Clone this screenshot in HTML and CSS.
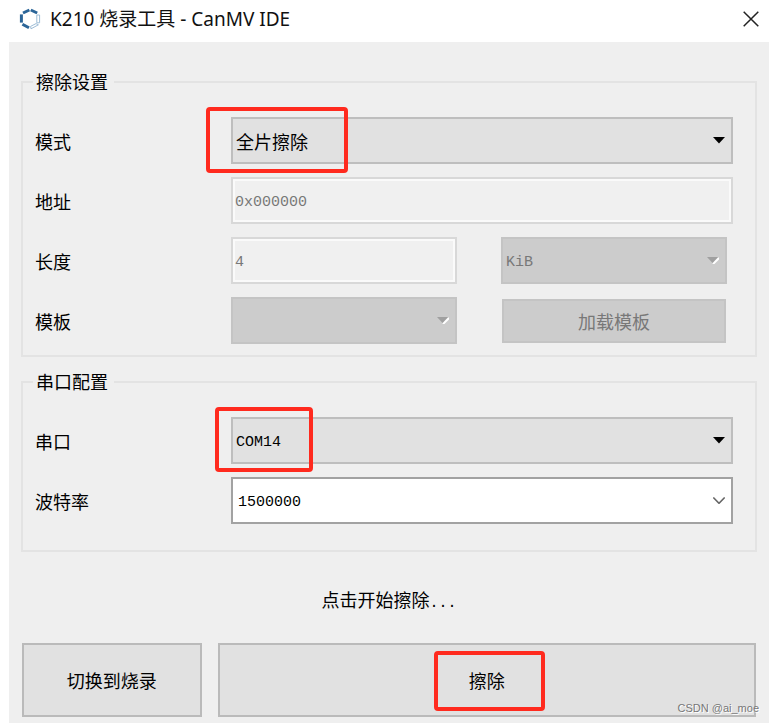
FILE: index.html
```html
<!DOCTYPE html>
<html lang="zh-CN">
<head>
<meta charset="utf-8">
<title>K210 烧录工具 - CanMV IDE</title>
<link rel="stylesheet" href="styles.css">
</head>
<body>
<main class="window">
  <header class="titlebar">
    <svg class="logo" viewBox="0 0 22 22" aria-hidden="true">
      <g fill="none" stroke="#2b6598" stroke-width="3">
        <path d="M10.4 2 4 5"/>
        <path d="M2.4 6.4V14.6"/>
        <path d="M3.4 16.2 10 19.8"/>
        <path d="M11.8 2 18.2 5"/>
      </g>
      <g fill="#fff" stroke="#9dbcd6" stroke-width="1">
        <path d="M17.8 7H20.6V14.8H17.8Z"/>
        <path d="M11.6 18.4 17 15.6 19.4 16.8 12 20.8Z"/>
      </g>
    </svg>
    <h1 class="title">K210 烧录工具 - CanMV IDE</h1>
    <button class="close" type="button" aria-label="关闭">
      <svg viewBox="0 0 16 16"><path d="M.7.7 15.3 15.3M15.3.7.7 15.3" fill="none" stroke="#222" stroke-width="1.5"/></svg>
    </button>
  </header>
  <form class="dialog">
    <fieldset class="group">
      <legend>擦除设置</legend>
      <div class="row">
        <label for="mode">模式</label>
        <div class="combo">
          <select id="mode" class="field"><option>全片擦除</option></select>
          <svg class="arrow" viewBox="0 0 12 7"><path d="M0 0H12L6 6.5Z" fill="#000"/></svg>
          <span class="mark mark-mode"></span>
        </div>
      </div>
      <div class="row">
        <label for="address">地址</label>
        <input id="address" class="field text mono" type="text" value="0x000000" disabled>
      </div>
      <div class="row">
        <label for="length">长度</label>
        <div class="pair">
          <input id="length" class="field text mono" type="text" value="4" disabled>
          <div class="combo">
            <select class="field mono" aria-label="单位" disabled><option>KiB</option></select>
            <svg class="arrow" viewBox="0 0 12 7"><path d="M6 7 12 1" stroke="#fff" stroke-width="2"/><path d="M0 0H11L5.5 6Z" fill="#a0a0a0"/></svg>
          </div>
        </div>
      </div>
      <div class="row">
        <label for="template">模板</label>
        <div class="pair">
          <div class="combo">
            <select id="template" class="field" disabled><option></option></select>
            <svg class="arrow" viewBox="0 0 12 7"><path d="M6 7 12 1" stroke="#fff" stroke-width="2"/><path d="M0 0H11L5.5 6Z" fill="#a0a0a0"/></svg>
          </div>
          <button class="button load" type="button" disabled>加载模板</button>
        </div>
      </div>
    </fieldset>
    <fieldset class="group serial">
      <legend>串口配置</legend>
      <div class="row">
        <label for="port">串口</label>
        <div class="combo">
          <select id="port" class="field mono"><option>COM14</option></select>
          <svg class="arrow" viewBox="0 0 12 7"><path d="M0 0H12L6 6.5Z" fill="#000"/></svg>
          <span class="mark mark-port"></span>
        </div>
      </div>
      <div class="row">
        <label for="baud">波特率</label>
        <div class="combo">
          <input id="baud" class="field editable mono" type="text" value="1500000">
          <svg class="arrow" viewBox="0 0 12 7"><path d="M.3.5 6 6.3 11.7.5" fill="none" stroke="#666" stroke-width="1.6"/></svg>
        </div>
      </div>
    </fieldset>
    <p class="status">点击开始擦除<span class="dots">...</span></p>
    <div class="actions">
      <button class="button" type="button">切换到烧录</button>
      <button class="button erase" type="button">擦除<span class="mark mark-erase"></span></button>
    </div>
  </form>
  <span class="watermark">CSDN @ai_moe</span>
</main>
</body>
</html>
```
FILE: styles.css
```css
* { box-sizing: border-box; }

body {
  margin: 0;
  background: #fff;
  color: #000;
  font: 18px/24px "Noto Sans CJK SC", sans-serif;
}

.window {
  position: relative;
  display: flex;
  flex-direction: column;
  min-height: 100vh;
  padding: 0 4px 0 9px;
}

.titlebar {
  display: flex;
  align-items: center;
  height: 42px;
  padding: 0 10px 5px;
}

.logo { width: 22px; height: 22px; }

.title {
  flex: 1;
  margin: 0 0 0 9px;
  color: #111;
  font: 19px/24px "Noto Sans", "Noto Sans CJK SC", sans-serif;
}

.close {
  display: flex;
  padding: 0;
  border: 0;
  background: none;
}

.close svg { width: 16px; height: 16px; }

.dialog {
  flex: 1;
  padding: 28px 12px 6px;
  background: #efefef;
}

.group {
  min-width: 0;
  margin: 0 0 13px;
  padding: 23px 22px 11px 12px;
  border: 2px solid #e3e3e3;
}

.serial { margin-bottom: 0; padding-bottom: 26px; }

legend {
  height: 24px;
  margin-left: -2px;
  padding: 0 6px 0 3px;
  line-height: 22px;
}

.row {
  display: grid;
  grid-template-columns: 196px 1fr;
  align-items: center;
}

.row + .row { margin-top: 13px; }

.pair {
  display: grid;
  grid-template-columns: 1fr 1fr;
  align-items: center;
  gap: 44px;
  padding-right: 6px;
}

.combo { position: relative; }

.field {
  display: block;
  width: 100%;
  height: 47px;
  margin: 0;
  padding: 0 3px;
  border: 2px solid #bebebe;
  border-radius: 0;
  appearance: none;
  background: #e1e1e1;
  color: #000;
  font: inherit;
  opacity: 1;
}

.field:disabled, .button:disabled {
  border-color: #c4c4c4;
  background: #ccc;
  color: #787878;
}

.text:disabled {
  padding: 0 2px;
  border-color: #d8d8d8;
  background: #f0f0f0;
  box-shadow: inset 0 0 0 2px #fafafa;
}

.editable {
  padding: 0 5px;
  border-color: #a2a2a2;
  background: #fff;
}

.mono, .dots { font-family: "Liberation Mono", monospace; font-size: 15px; }

.field.mono { padding-top: 4px; }

.dots { line-height: 1; }

.arrow {
  position: absolute;
  top: 20px;
  right: 8px;
  width: 12px;
  height: 7px;
  pointer-events: none;
}

.button {
  position: relative;
  padding: 0;
  border: 2px solid #bababa;
  background: #e1e1e1;
  color: #000;
  font: inherit;
}

.load { height: 44px; margin: 0 1px; }

.status {
  margin: 0;
  padding: 35px 0 32px;
  text-align: center;
}

.actions {
  display: grid;
  grid-template-columns: 1fr 3fr;
  gap: 16px;
  padding: 0 1px;
}

.actions .button { height: 74px; }

.mark {
  position: absolute;
  border: 4px solid #ff2a1e;
  border-radius: 4px;
  pointer-events: none;
}

.mark-mode { left: -25px; top: -10px; width: 142px; height: 66px; }
.mark-port { left: -16px; top: -10px; width: 98px; height: 65px; }
.mark-erase { left: 50%; top: 6px; width: 111px; height: 60px; margin-left: -53px; }

.watermark {
  position: absolute;
  right: 14px;
  bottom: 7px;
  color: #777;
  font: 11px/16px "Liberation Sans", sans-serif;
  text-shadow: 1px 1px 0 #fff;
}
```
